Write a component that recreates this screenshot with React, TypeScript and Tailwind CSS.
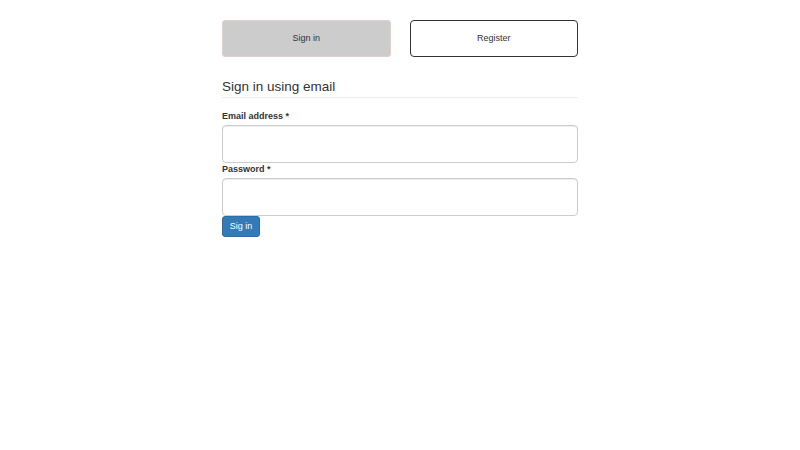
export default function App() {
  return (
    <div className="min-h-[450px] w-full bg-white" style={{ fontFamily: '"Liberation Sans", Arial, sans-serif' }}>
      <div className="mx-auto w-[356px] pt-[20px]">
        <div className="flex gap-[19px]">
          <button className="h-[37px] flex-1 rounded-[3px] border border-[#e3cfd2] bg-[#cccccc] text-[9px] text-[#333]">
            Sign in
          </button>
          <button className="h-[37px] flex-1 rounded-[4px] border border-[#333] bg-white text-[9px] text-[#333]">
            Register
          </button>
        </div>
        <h3 className="mt-[20px] border-b border-[#eeeeee] text-[13.5px] leading-[20px] text-[#333]">
          Sign in using email
        </h3>
        <label className="mt-[11px] block text-[9px] font-bold leading-[14px] text-[#333]">Email address *</label>
        <input className="mt-[2px] block h-[38px] w-full rounded-[4px] border border-[#ccc] shadow-[inset_0_1px_1px_rgba(0,0,0,0.075)]" />
        <label className="block text-[9px] font-bold leading-[13px] text-[#333]">Password *</label>
        <input type="password" className="mt-[2px] block h-[38px] w-full rounded-[4px] border border-[#ccc] shadow-[inset_0_1px_1px_rgba(0,0,0,0.075)]" />
        <button className="block h-[21px] w-[38px] rounded-[3px] border border-[#2e6da4] bg-[#337ab7] text-[9px] text-white">
          Sig in
        </button>
      </div>
    </div>
  );
}
